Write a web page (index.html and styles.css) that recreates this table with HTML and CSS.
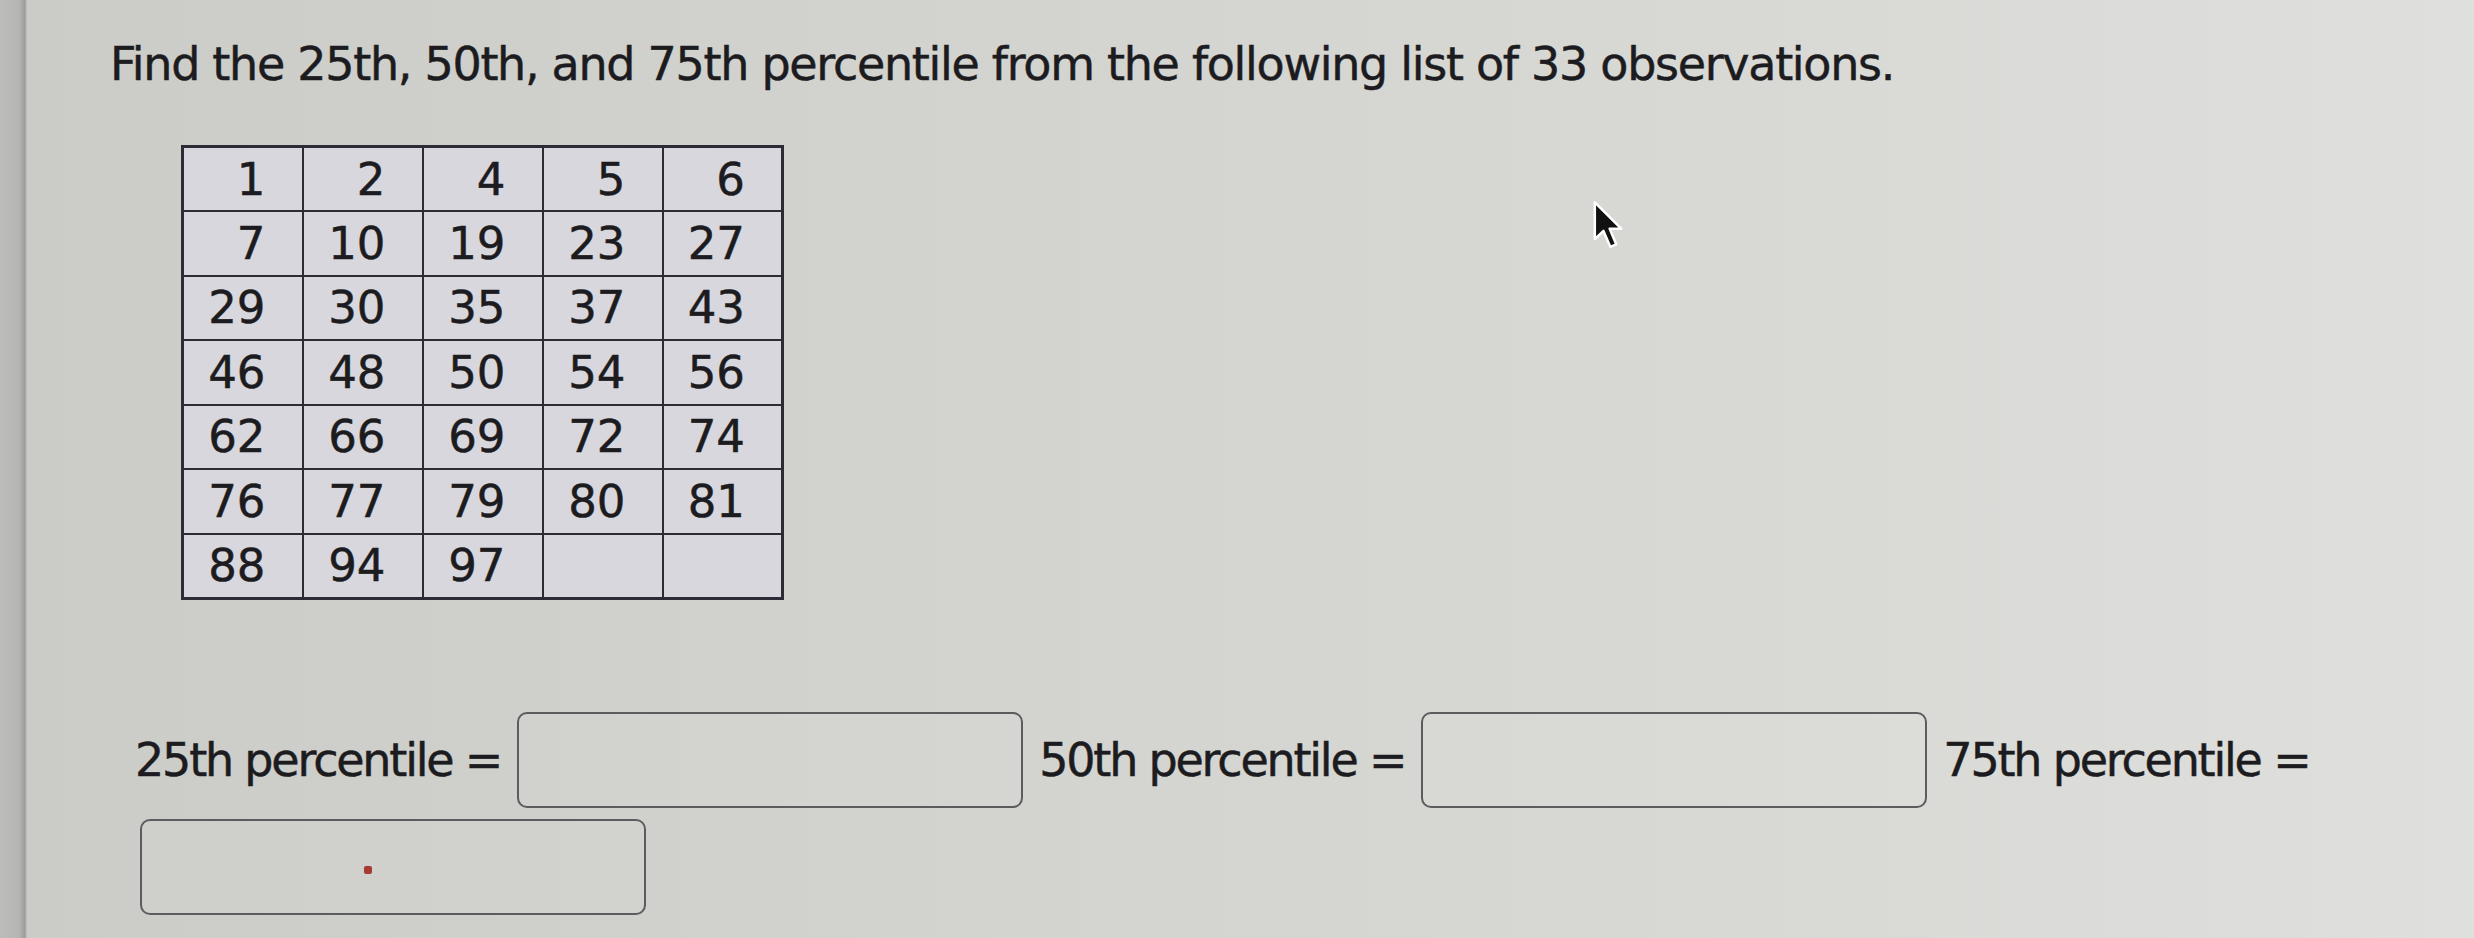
FILE: index.html
```html
<!DOCTYPE html>
<html lang="en">
<head>
<meta charset="utf-8">
<title>Percentiles</title>
<link rel="stylesheet" href="styles.css">
</head>
<body>
<div class="bezel"></div>
<main class="content">
  <p class="prompt">Find the 25th, 50th, and 75th percentile from the following list of 33 observations.</p>
  <table class="data">
    <tr><td>1</td><td>2</td><td>4</td><td>5</td><td>6</td></tr>
    <tr><td>7</td><td>10</td><td>19</td><td>23</td><td>27</td></tr>
    <tr><td>29</td><td>30</td><td>35</td><td>37</td><td>43</td></tr>
    <tr><td>46</td><td>48</td><td>50</td><td>54</td><td>56</td></tr>
    <tr><td>62</td><td>66</td><td>69</td><td>72</td><td>74</td></tr>
    <tr><td>76</td><td>77</td><td>79</td><td>80</td><td>81</td></tr>
    <tr><td>88</td><td>94</td><td>97</td><td></td><td></td></tr>
  </table>
  <div class="answers">
    <span class="label">25th percentile =</span>
    <span class="box"></span>
    <span class="label">50th percentile =</span>
    <span class="box"></span>
    <span class="label">75th percentile =</span>
    <span class="box box-last"><span class="dot"></span></span>
  </div>
</main>
<svg class="pointer" viewBox="0 0 14 22" width="32" height="50" aria-hidden="true">
  <path d="M1.2 1 L1.2 17.2 L5 13.6 L8 20.6 L10.6 19.5 L7.7 12.6 L12.8 12.6 Z" fill="#111" stroke="#fff" stroke-width="1.1" stroke-linejoin="round"/>
</svg>
</body>
</html>
```
FILE: styles.css
```css
html, body {
  margin: 0;
  padding: 0;
}

body {
  display: flex;
  min-height: 938px;
  background: linear-gradient(to right, #cbcbc7 0%, #d2d2ce 35%, #d8d8d5 70%, #dfdfdd 100%);
  font-family: "DejaVu Sans", Verdana, sans-serif;
  color: #1c1c20;
  position: relative;
  overflow: hidden;
}

.bezel {
  flex: 0 0 27px;
  background: linear-gradient(to right, #bcbcb9 0%, #b5b5b3 70%, #9d9d9b 92%, #c4c4c0 100%);
}

.content {
  flex: 1;
  padding: 37px 0 0 83px;
}

.prompt {
  margin: 0;
  font-size: 46px;
  line-height: 54px;
  letter-spacing: -1.3px;
  -webkit-text-stroke: 0.5px #1c1c20;
}

.data {
  margin: 54px 0 0 71px;
  border-collapse: collapse;
  table-layout: fixed;
  width: 603px;
  border: 3px solid #2c2b36;
}

.data td {
  width: 120px;
  height: 64.5px;
  padding: 0 36px 0 0;
  box-sizing: border-box;
  border: 2.5px solid #2c2b36;
  background: #d7d7dd;
  text-align: right;
  font-size: 45px;
  line-height: 1;
  vertical-align: middle;
  -webkit-text-stroke: 0.5px #1c1c20;
}

.answers {
  margin: 112px 0 0 25px;
  display: flex;
  flex-wrap: wrap;
  align-items: center;
  column-gap: 16px;
  row-gap: 11px;
}

.label {
  font-size: 46px;
  line-height: 54px;
  letter-spacing: -2.2px;
  -webkit-text-stroke: 0.5px #1c1c20;
}

.box {
  width: 506px;
  height: 96px;
  box-sizing: border-box;
  border: 2px solid #5c5c5e;
  border-radius: 10px;
  background: rgba(255, 255, 255, 0.06);
  display: flex;
  align-items: center;
  justify-content: center;
}

.box-last {
  margin-left: 5px;
}

.dot {
  width: 8px;
  height: 8px;
  border-radius: 2px;
  background: #a83a34;
  margin-right: 50px;
  margin-top: 6px;
}

.pointer {
  position: absolute;
  left: 1592px;
  top: 200px;
}
```
